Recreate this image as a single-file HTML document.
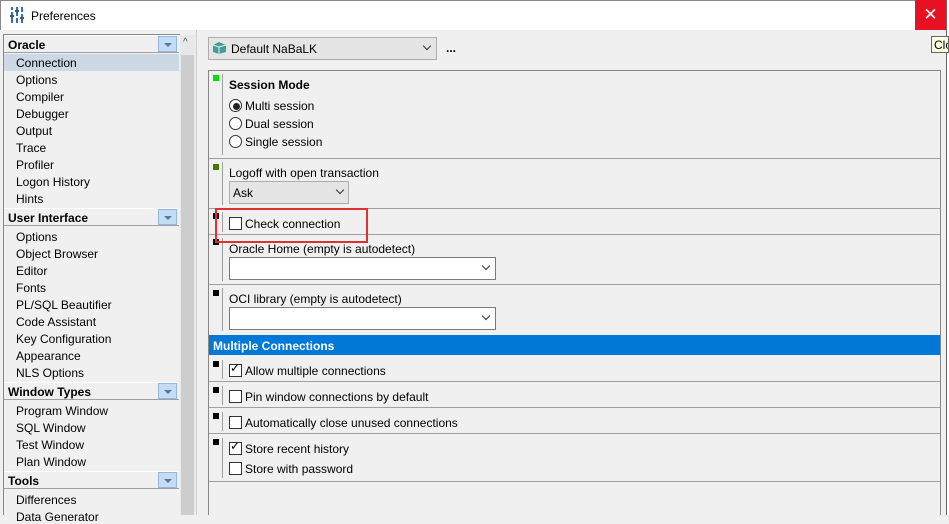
<!DOCTYPE html>
<html><head><meta charset="utf-8"><style>
*{box-sizing:border-box;margin:0;padding:0}
body{width:949px;height:515px;overflow:hidden;background:#f0f0f0;font-family:"Liberation Sans",sans-serif;font-size:12px;color:#000;position:relative}
.a{position:absolute}
.t{position:absolute;white-space:nowrap;font-size:12px}
.hdr{position:absolute;left:4px;width:175px;height:18px;background:#f0f0f0;border-top:1px solid #fff;border-bottom:1px solid #a0a0a0;font-weight:bold;padding:2px 0 0 4px}
.hdr .dd{position:absolute;right:2px;top:0px;width:19px;height:16px;background:#c5dcf3;border:1px solid #90b8e0}
.hdr .dd:after{content:"";position:absolute;left:5px;top:6px;border-left:4px solid transparent;border-right:4px solid transparent;border-top:4px solid #4a7ab0}
.it{position:absolute;left:16px;white-space:nowrap}
.hl{position:absolute;left:209px;width:731px;height:1px;background:#a0a0a0}
.vl{position:absolute;left:222px;width:1px;background:#a0a0a0}
.sq{position:absolute;left:213px;width:6px;height:6px;background:#000}
.cb{position:absolute;left:229px;width:13px;height:13px;border:1px solid #333;background:#fff}
.rb{position:absolute;left:229px;width:13px;height:13px;border:1px solid #333;border-radius:50%;background:#fff}
.combo{position:absolute;background:#fff;border:1px solid #7a7a7a}
.chev{position:absolute;width:6px;height:6px;border-right:1px solid #333;border-bottom:1px solid #333;transform:rotate(45deg)}
</style></head><body>
<!-- title bar -->
<div class="a" style="left:0;top:0;width:946px;height:30px;background:#fff;border-left:1px solid #888;border-top:1px solid #888"></div>
<svg class="a" style="left:9px;top:7px" width="18" height="17"><g fill="#2f6fb5"><rect x="2" y="0" width="2" height="16"/><rect x="7" y="0" width="2" height="16"/><rect x="12" y="0" width="2" height="16"/></g><g fill="#fff"><rect x="2" y="3" width="2" height="2"/><rect x="7" y="9" width="2" height="2"/><rect x="12" y="5" width="2" height="2"/></g><g fill="#555"><rect x="1" y="8" width="4" height="2"/><rect x="6" y="3" width="4" height="2"/><rect x="11" y="10" width="4" height="2"/></g></svg>
<div class="t" style="left:31px;top:9px">Preferences</div>
<div class="a" style="left:915px;top:0;width:31px;height:30px;background:#e81123;color:#fff;font-size:17px;text-align:center;line-height:29px">✕</div>
<div class="a" style="left:946px;top:0;width:3px;height:515px;background:#fff;border-left:1px solid #666"></div>
<div class="a" style="left:931px;top:36px;width:18px;height:17px;background:#ffffe1;border:1px solid #666;font-size:12px;padding:1px 0 0 2px;overflow:hidden">Clo</div>

<!-- left list -->
<div class="a" style="left:3px;top:34px;width:177px;height:481px;background:#f0f0f0;border-left:1px solid #888;border-top:1px solid #888"></div>
<div class="a" style="left:180px;top:35px;width:15px;height:480px;background:#e8e8e8"></div>
<div class="a" style="left:181px;top:55px;width:13px;height:460px;background:#cdcdcd"></div>
<div class="t" style="left:183px;top:37px;font-size:10px;color:#555">^</div>
<div class="a" style="left:196px;top:30px;width:1px;height:485px;background:#ccc"></div>

<div class="hdr" style="top:35px">Oracle<div class="dd"></div></div>
<div class="a" style="left:4px;top:54px;width:175px;height:17px;background:#cdd8e5"></div>
<div class="it" style="top:56px">Connection</div>
<div class="it" style="top:73px">Options</div>
<div class="it" style="top:90px">Compiler</div>
<div class="it" style="top:107px">Debugger</div>
<div class="it" style="top:124px">Output</div>
<div class="it" style="top:141px">Trace</div>
<div class="it" style="top:158px">Profiler</div>
<div class="it" style="top:175px">Logon History</div>
<div class="it" style="top:192px">Hints</div>
<div class="hdr" style="top:208px">User Interface<div class="dd"></div></div>
<div class="it" style="top:230px">Options</div>
<div class="it" style="top:247px">Object Browser</div>
<div class="it" style="top:264px">Editor</div>
<div class="it" style="top:281px">Fonts</div>
<div class="it" style="top:298px">PL/SQL Beautifier</div>
<div class="it" style="top:315px">Code Assistant</div>
<div class="it" style="top:332px">Key Configuration</div>
<div class="it" style="top:349px">Appearance</div>
<div class="it" style="top:366px">NLS Options</div>
<div class="hdr" style="top:382px">Window Types<div class="dd"></div></div>
<div class="it" style="top:404px">Program Window</div>
<div class="it" style="top:421px">SQL Window</div>
<div class="it" style="top:438px">Test Window</div>
<div class="it" style="top:455px">Plan Window</div>
<div class="hdr" style="top:471px">Tools<div class="dd"></div></div>
<div class="it" style="top:493px">Differences</div>
<div class="it" style="top:510px">Data Generator</div>

<!-- right toolbar -->
<div class="a" style="left:208px;top:37px;width:229px;height:23px;background:#e5e5e5;border:1px solid #adadad"></div>
<svg class="a" style="left:212px;top:41px" width="15" height="14"><path d="M1 4 L7 1 L14 4 L14 11 L7 13 L1 11Z" fill="#4a9a9a"/><path d="M1 4 L7 6 L14 4 M7 6 V13" stroke="#cfe" fill="none"/></svg>
<div class="t" style="left:231px;top:42px">Default NaBaLK</div>
<div class="chev" style="left:424px;top:43px"></div>
<div class="t" style="left:446px;top:41px;font-weight:bold">...</div>

<!-- panel -->
<div class="a" style="left:208px;top:70px;width:733px;height:445px;border-left:1px solid #888;border-top:1px solid #888;border-right:1px solid #888"></div>
<div class="a" style="left:940px;top:70px;width:1px;height:412px;background:#888"></div>
<div class="hl" style="top:481px"></div>

<div class="a" style="left:213px;top:75px;width:6px;height:6px;background:#00e000"></div>
<div class="vl" style="top:74px;height:81px"></div>
<div class="t" style="left:229px;top:78px;font-weight:bold">Session Mode</div>
<div class="rb" style="top:99px"></div><div class="a" style="left:233px;top:103px;width:7px;height:7px;border-radius:50%;background:#222"></div>
<div class="t" style="left:245px;top:99px">Multi session</div>
<div class="rb" style="top:117px"></div><div class="t" style="left:245px;top:117px">Dual session</div>
<div class="rb" style="top:135px"></div><div class="t" style="left:245px;top:135px">Single session</div>
<div class="hl" style="top:158px"></div>

<div class="a" style="left:213px;top:164px;width:6px;height:6px;background:#3c7a00"></div>
<div class="vl" style="top:162px;height:43px"></div>
<div class="t" style="left:229px;top:166px">Logoff with open transaction</div>
<div class="a" style="left:229px;top:181px;width:120px;height:23px;background:#e5e5e5;border:1px solid #adadad"></div>
<div class="t" style="left:233px;top:186px">Ask</div>
<div class="chev" style="left:337px;top:187px"></div>
<div class="hl" style="top:208px"></div>

<div class="sq" style="top:213px"></div>
<div class="vl" style="top:212px;height:20px"></div>
<div class="cb" style="top:217px"></div>
<div class="t" style="left:245px;top:217px">Check connection</div>
<div class="hl" style="top:234px"></div>

<div class="sq" style="top:239px"></div>
<div class="vl" style="top:238px;height:43px"></div>
<div class="t" style="left:229px;top:242px">Oracle Home (empty is autodetect)</div>
<div class="combo" style="left:229px;top:257px;width:267px;height:23px"></div>
<div class="chev" style="left:483px;top:263px"></div>
<div class="hl" style="top:284px"></div>

<div class="sq" style="top:290px"></div>
<div class="vl" style="top:288px;height:43px"></div>
<div class="t" style="left:229px;top:292px">OCI library (empty is autodetect)</div>
<div class="combo" style="left:229px;top:307px;width:267px;height:23px"></div>
<div class="chev" style="left:483px;top:313px"></div>

<div class="a" style="left:209px;top:335px;width:731px;height:20px;background:#0078d7;color:#fff;font-weight:bold;padding:4px 0 0 4px">Multiple Connections</div>

<div class="sq" style="top:361px"></div>
<div class="vl" style="top:360px;height:19px"></div>
<div class="cb" style="top:364px"></div><div class="t" style="left:230px;top:361px;font-size:12px">✓</div>
<div class="t" style="left:245px;top:364px">Allow multiple connections</div>
<div class="hl" style="top:381px"></div>

<div class="sq" style="top:387px"></div>
<div class="vl" style="top:386px;height:19px"></div>
<div class="cb" style="top:390px"></div>
<div class="t" style="left:245px;top:390px">Pin window connections by default</div>
<div class="hl" style="top:407px"></div>

<div class="sq" style="top:413px"></div>
<div class="vl" style="top:412px;height:19px"></div>
<div class="cb" style="top:416px"></div>
<div class="t" style="left:245px;top:416px">Automatically close unused connections</div>
<div class="hl" style="top:433px"></div>

<div class="sq" style="top:439px"></div>
<div class="vl" style="top:438px;height:40px"></div>
<div class="cb" style="top:442px"></div><div class="t" style="left:230px;top:439px">✓</div>
<div class="t" style="left:245px;top:442px">Store recent history</div>
<div class="cb" style="top:462px"></div>
<div class="t" style="left:245px;top:462px">Store with password</div>

<div class="a" style="left:215px;top:208px;width:153px;height:35px;border:2px solid #e03030"></div>
</body></html>
